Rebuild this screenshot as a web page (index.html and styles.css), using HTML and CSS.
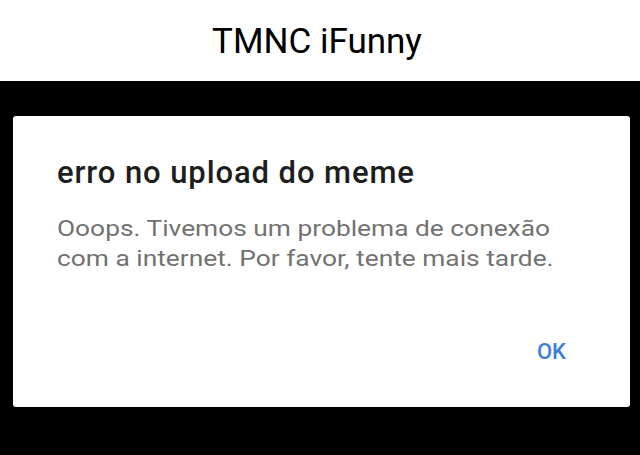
FILE: index.html
```html
<!DOCTYPE html>
<html lang="pt">
<head>
<meta charset="utf-8">
<title>TMNC iFunny</title>
<link rel="stylesheet" href="styles.css">
</head>
<body>
<header class="top">
  <h1 class="brand">TMNC iFunny</h1>
</header>
<main class="screen">
  <div class="dialog">
    <h2 class="dialog-title">erro no upload do meme</h2>
    <p class="dialog-text">Ooops. Tivemos um problema de conexão com a internet. Por favor, tente mais tarde.</p>
    <div class="dialog-actions">
      <button class="btn-ok">OK</button>
    </div>
  </div>
</main>
</body>
</html>
```
FILE: styles.css
```css
html, body {
  margin: 0;
  padding: 0;
  height: 100%;
}
body {
  width: 640px;
  height: 455px;
  overflow: hidden;
  font-family: Roboto, "Liberation Sans", sans-serif;
  background: #000;
  display: flex;
  flex-direction: column;
}
.top {
  height: 81px;
  background: #fff;
  display: flex;
  justify-content: center;
  align-items: flex-start;
  padding-right: 6px;
}
.brand {
  margin: 20px 0 0;
  font-size: 35px;
  font-weight: 400;
  color: #000;
  line-height: 44px;
}
.screen {
  flex: 1;
  padding: 35px 10px 0 13px;
}
.dialog {
  background: #fff;
  border-radius: 3px;
  height: 291px;
  box-sizing: border-box;
  padding: 37px 40px 0 44px;
  display: flex;
  flex-direction: column;
}
.dialog-title {
  margin: 0;
  font-size: 31px;
  font-weight: 500;
  letter-spacing: 0.9px;
  color: #1e1e1e;
  line-height: 40px;
}
.dialog-text {
  margin: 20px 0 0;
  width: 432px;
  font-size: 22.5px;
  line-height: 30px;
  color: #727272;
  transform: scaleX(1.17);
  transform-origin: left top;
}
.dialog-actions {
  display: flex;
  justify-content: flex-end;
  margin-top: 64px;
}
.btn-ok {
  border: 0;
  background: none;
  padding: 0;
  margin-right: 24px;
  font-family: inherit;
  font-size: 22px;
  font-weight: 500;
  color: #3c7ed8;
  line-height: 30px;
}
```
